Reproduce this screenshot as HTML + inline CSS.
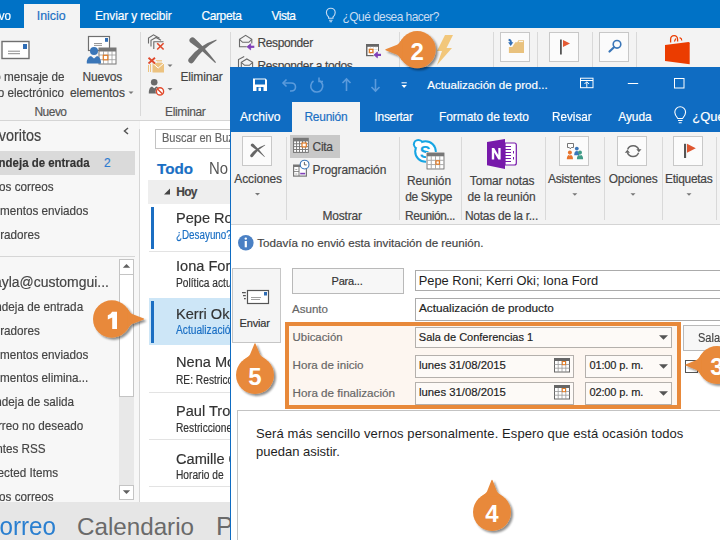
<!DOCTYPE html><html><head><meta charset="utf-8"><style>
html,body{margin:0;padding:0;width:720px;height:540px;overflow:hidden;background:#f3f3f3;font-family:'Liberation Sans', sans-serif;}
.t{position:absolute;white-space:nowrap;transform-origin:0 0;-webkit-text-stroke:0.18px currentColor;}
svg{position:absolute;left:0;top:0;}
</style></head><body>
<div style="position:absolute;left:0px;top:0px;width:720px;height:28px;background:#0072c6;"></div>
<div style="position:absolute;left:24px;top:4px;width:56px;height:24px;background:#f3f3f3;"></div>
<div style="position:absolute;left:0px;top:28px;width:720px;height:92px;background:#f3f3f3;"></div>
<div style="position:absolute;left:0px;top:120px;width:720px;height:1px;background:#d5d5d5;"></div>
<div style="position:absolute;left:0px;top:121px;width:139px;height:381px;background:#f7f7f7;"></div>
<div style="position:absolute;left:139px;top:129px;width:1px;height:373px;background:#d6d6d6;"></div>
<div style="position:absolute;left:0px;top:151px;width:135px;height:24px;background:#dadada;"></div>
<div style="position:absolute;left:0px;top:256px;width:135px;height:1px;background:#d6d6d6;"></div>
<div style="position:absolute;left:119px;top:259px;width:15px;height:241px;background:#e8e8e8;"></div>
<div style="position:absolute;left:119px;top:259px;width:15px;height:16px;background:#ffffff;border:1px solid #c4c4c4;box-sizing:border-box;"></div>
<div style="position:absolute;left:119px;top:274px;width:15px;height:123px;background:#ffffff;border:1px solid #c4c4c4;box-sizing:border-box;"></div>
<div style="position:absolute;left:119px;top:485px;width:15px;height:15px;background:#ffffff;border:1px solid #c4c4c4;box-sizing:border-box;"></div>
<div style="position:absolute;left:140px;top:121px;width:90px;height:381px;background:#ffffff;"></div>
<div style="position:absolute;left:155px;top:129px;width:80px;height:20px;background:#ffffff;border:1px solid #c3c3c3;box-sizing:border-box;"></div>
<div style="position:absolute;left:148px;top:180px;width:82px;height:24px;background:#eeeeee;"></div>
<div style="position:absolute;left:149px;top:251px;width:81px;height:1px;background:#e3e3e3;"></div>
<div style="position:absolute;left:149px;top:439px;width:81px;height:1px;background:#e3e3e3;"></div>
<div style="position:absolute;left:149px;top:486px;width:81px;height:1px;background:#e3e3e3;"></div>
<div style="position:absolute;left:149px;top:392px;width:81px;height:1px;background:#e3e3e3;"></div>
<div style="position:absolute;left:149px;top:298px;width:81px;height:47px;background:#cde6f7;"></div>
<div style="position:absolute;left:151px;top:207px;width:3px;height:42px;background:#1b6ec2;"></div>
<div style="position:absolute;left:151px;top:301px;width:3px;height:42px;background:#1b6ec2;"></div>
<div style="position:absolute;left:0px;top:502px;width:720px;height:38px;background:#e6e6e6;"></div>
<div style="position:absolute;left:140px;top:32px;width:1px;height:84px;background:#d9d9d9;"></div>
<div style="position:absolute;left:230px;top:32px;width:1px;height:84px;background:#d9d9d9;"></div>
<div style="position:absolute;left:399px;top:32px;width:1px;height:35px;background:#d9d9d9;"></div>
<div style="position:absolute;left:493px;top:32px;width:1px;height:35px;background:#d9d9d9;"></div>
<div style="position:absolute;left:537px;top:32px;width:1px;height:35px;background:#d9d9d9;"></div>
<div style="position:absolute;left:592px;top:32px;width:1px;height:35px;background:#d9d9d9;"></div>
<div style="position:absolute;left:636px;top:32px;width:1px;height:35px;background:#d9d9d9;"></div>
<div style="position:absolute;left:500px;top:32px;width:30px;height:30px;background:#fbfbfb;border:1px solid #c8c8c8;box-sizing:border-box;"></div>
<div style="position:absolute;left:549px;top:32px;width:30px;height:30px;background:#fbfbfb;border:1px solid #c8c8c8;box-sizing:border-box;"></div>
<div style="position:absolute;left:599px;top:32px;width:30px;height:30px;background:#fbfbfb;border:1px solid #c8c8c8;box-sizing:border-box;"></div>
<svg width="720" height="540" viewBox="0 0 720 540">
<!-- lightbulb top -->
<g stroke="#c8dcf2" fill="none" stroke-width="1.1"><path d="M328.6 18.3 V17 Q326.4 15.3 326.4 12.6 A4.4 4.4 0 0 1 335.2 12.6 Q335.2 15.3 333 17 V18.3 Z"/><path d="M329 20.2h3.6M329.6 21.8h2.4"/></g>
<!-- new mail -->
<rect x="2" y="41.5" width="27" height="17" fill="#fff" stroke="#6f6f6f" stroke-width="1.4"/>
<rect x="23" y="44" width="4" height="5" fill="#2f6db5"/>
<path d="M8 51.2h12M8 53.7h12" stroke="#8a8a8a" stroke-width="1"/>
<!-- nuevos elementos -->
<rect x="88.5" y="36.5" width="21" height="14" fill="#fff" stroke="#6f6f6f" stroke-width="1.2"/>
<rect x="105" y="38" width="3" height="3.8" fill="#2f6db5"/>
<path d="M94 43.5h8M94 45.4h8" stroke="#8a8a8a" stroke-width="0.9"/>
<rect x="99" y="48" width="17" height="16" fill="#fff" stroke="#777" stroke-width="1"/>
<rect x="99" y="48" width="17" height="3.5" fill="#777"/>
<path d="M103.5 51v13M108 51v13M112 51v13M99 55h17M99 59.7h17" stroke="#999" stroke-width="0.8"/>
<rect x="103.3" y="55.3" width="4.5" height="4.5" fill="#fff" stroke="#e07b26" stroke-width="1.2"/>
<circle cx="94" cy="51" r="4" fill="#3a76b8"/>
<path d="M86.8 63.5 Q86.5 57 91 56 L94 58.5 L97 56 Q101 57 101 63.5 Z" fill="#3a76b8"/>
<!-- dropdown tri nuevos -->
<path d="M128.5 91.5h5l-2.5 2.5z" fill="#777"/>
<!-- ignore -->
<g fill="none" stroke="#6a6a6a" stroke-width="1.1">
<path d="M148.5 43.5 V38 L153.5 34.8 L159.5 38.3"/><path d="M151 46.5 V40.3 L156 37.5 L161 40.3"/><path d="M153.8 49 V41.8 H163.5"/></g>
<path d="M157.2 43.2 L163.6 49.5 M163.6 43.2 L157.2 49.5" stroke="#e0492c" stroke-width="1.6"/>
<!-- cleanup -->
<rect x="152.5" y="63" width="11.5" height="9.5" fill="#ecc27f"/>
<path d="M152.5 63 L158.2 68 L164 63" stroke="#fff" stroke-width="1" fill="none"/>
<path d="M148.5 65v7M150.5 64v8" stroke="#ecc27f" stroke-width="1"/>
<path d="M156 60.5h6M157 62h5" stroke="#ecc27f" stroke-width="0.8"/>
<path d="M148.5 57.8 L155 63.5 M155 57.8 L148.5 63.5" stroke="#e0492c" stroke-width="1.8"/>
<path d="M167.5 64.5h5l-2.5 2.5z" fill="#777"/>
<!-- junk -->
<circle cx="154.2" cy="82.2" r="3.3" fill="#6a6a6a"/>
<path d="M148.8 93.5 Q148.8 87 152 86.5 L154.2 88.3 L156.4 86.5 Q158.5 87 159 88.5 L157 93.5 Z" fill="#6a6a6a"/>
<path d="M153.6 86.6 L154.2 88.6 L154.8 86.6 Z" fill="#fff"/>
<circle cx="160" cy="91.4" r="4.4" fill="#fff"/>
<circle cx="160" cy="91.4" r="3.6" fill="none" stroke="#e0492c" stroke-width="1.4"/>
<path d="M157.5 88.9 L162.5 93.9" stroke="#e0492c" stroke-width="1.4"/>
<path d="M167.5 88h5l-2.5 2.5z" fill="#777"/>
<!-- big X -->
<path d="M194.6 38.3 Q205 48 216 62.3 L215.2 62.9 Q203 51 190.4 42.6 A2.8 2.8 0 0 1 194.6 38.3 Z" fill="#707070"/>
<path d="M188.9 58.6 Q199.5 45 216.3 39.6 L216.6 40.5 Q202.5 48.5 193.6 62.1 A2.9 2.9 0 0 1 188.9 58.6 Z" fill="#707070"/>
<!-- reply -->
<g fill="none" stroke="#6a6a6a" stroke-width="1.1"><path d="M246.8 46.8 H239.5 V39.3 L245.6 35.3 L251.8 39.3 V43.5"/><path d="M239.5 39.3 L242.6 42.3 H248.8 L251.8 39.3"/></g>
<path d="M249.5 46.8h4.8" stroke="#8040b8" stroke-width="2.2"/><path d="M247 46.8 L250.6 43.8 V49.8 Z" fill="#8040b8" stroke="#8040b8" stroke-width="0.8" stroke-linejoin="round"/>
<!-- reply all (clipped) -->
<g fill="none" stroke="#6a6a6a" stroke-width="1.1"><path d="M238.5 67 V59.5 L244.2 56.5"/><path d="M241.3 67 V62.3 L246.8 59 L252.6 62.3 V67"/><path d="M241.3 62.3 L244.6 65.3 H249.4 L252.6 62.3"/></g>
<!-- meeting reply icon -->
<rect x="366" y="44" width="13" height="12.2" fill="#666"/>
<rect x="367.5" y="46.8" width="10.5" height="8.2" fill="#fff"/>
<path d="M367.5 49.5h10.5M367.5 52.3h10.5M370.5 46.8v8.2M373.5 46.8v8.2M376 46.8v8.2" stroke="#bbb" stroke-width="0.6" stroke-dasharray="1 1"/>
<rect x="369.4" y="49.3" width="3.5" height="3.3" fill="#fff" stroke="#e07b26" stroke-width="1.3"/>
<circle cx="377.5" cy="55" r="4" fill="#f1f1f1"/>
<path d="M376.5 54.9h4.5" stroke="#8040b8" stroke-width="2.2"/><path d="M374 54.9 L377.4 52 V57.8 Z" fill="#8040b8" stroke="#8040b8" stroke-width="0.8" stroke-linejoin="round"/>
<!-- lightning -->
<path d="M445 35 L453 35 L446.5 48 L452 48 L437 65 L442 51 L437 51 Z" fill="#f2c77b"/>
<!-- move folder -->
<path d="M508.9 47 L512.3 47 L515.3 42.2 L517.3 42.2 L518.3 40.2 L524 40.2 L524 53 L508.9 53 Z" fill="#e9c27e"/>
<path d="M518.8 41.6 h4.3" stroke="#fff" stroke-width="0.9"/>
<path d="M508.6 39.6 Q511.4 40.3 510.8 43" stroke="#2f6db5" stroke-width="1.8" fill="none"/>
<path d="M508.1 42.2 L513.3 42.2 L510.7 45.9 Z" fill="#2f6db5"/>
<!-- flag -->
<rect x="560" y="39.5" width="1.8" height="15" fill="#555"/>
<path d="M563 40 L570 43.5 L563 47 Z" fill="#e45a34"/>
<!-- search -->
<circle cx="617" cy="44.3" r="3.8" fill="none" stroke="#3a76b8" stroke-width="1.6"/>
<path d="M614 47.3 L609.5 51.5" stroke="#3a76b8" stroke-width="2.2" stroke-linecap="round"/>
<!-- store -->
<path d="M665 45 L688.5 42 Q689.7 42 689.7 43.3 L689.7 64.3 L665 61 Z" fill="#eb3c00"/>
<path d="M670.6 42.6 V39.5 Q670.6 35.6 674.2 35.6 Q677.4 35.6 677.6 39.5 V41.6" fill="none" stroke="#eb3c00" stroke-width="1.3"/>
<path d="M674.4 41.6 L675.8 38.6" stroke="#eb3c00" stroke-width="1.2"/>
<path d="M679.6 37.6 Q681.8 38.2 681.8 40.6" fill="none" stroke="#eb3c00" stroke-width="1.2"/>
<!-- nav chevron -->
<path d="M128 128 L124.5 131 L128 134" fill="none" stroke="#555" stroke-width="1.5"/>
<!-- hoy tri -->
<path d="M164 194.5 L170 194.5 L170 188.5 Z" fill="#444"/>
<!-- scrollbar tris -->
<path d="M122.8 267.8 h7.4 l-3.7 -3.7z" fill="#606060"/>
<path d="M122.8 490.2 h7.4 l-3.7 3.7z" fill="#606060"/>
</svg>
<div class="t" style="left:-28.02px;top:9.00px;font-size:13px;line-height:13px;color:#ffffff;font-weight:400;transform:scaleX(0.9000);">Archivo</div>
<div class="t" style="left:36.70px;top:10.01px;font-size:12.42px;line-height:12.42px;color:#1a6fc4;font-weight:400;letter-spacing:0.000px;">Inicio</div>
<div class="t" style="left:95.00px;top:11.00px;font-size:11.96px;line-height:11.96px;color:#ffffff;font-weight:400;letter-spacing:-0.149px;">Enviar y recibir</div>
<div class="t" style="left:201.40px;top:11.00px;font-size:11.96px;line-height:11.96px;color:#ffffff;font-weight:400;letter-spacing:-0.350px;">Carpeta</div>
<div class="t" style="left:271.40px;top:11.00px;font-size:11.96px;line-height:11.96px;color:#ffffff;font-weight:400;letter-spacing:-0.436px;">Vista</div>
<div class="t" style="left:342.60px;top:11.50px;font-size:11.96px;line-height:11.96px;color:#c8dcf2;font-weight:400;letter-spacing:-0.560px;-webkit-text-stroke:0;">¿Qué desea hacer?</div>
<div class="t" style="left:-32.57px;top:70.00px;font-size:13px;line-height:13px;color:#444444;font-weight:400;transform:scaleX(0.9000);">Nuevo mensaje de</div>
<div class="t" style="left:-29.30px;top:86.00px;font-size:13px;line-height:13px;color:#444444;font-weight:400;transform:scaleX(0.9000);">correo electrónico</div>
<div class="t" style="left:34.50px;top:107.00px;font-size:11.96px;line-height:11.96px;color:#555;font-weight:400;letter-spacing:-0.514px;">Nuevo</div>
<div class="t" style="left:82.60px;top:72.00px;font-size:11.96px;line-height:11.96px;color:#444444;font-weight:400;letter-spacing:-0.192px;">Nuevos</div>
<div class="t" style="left:70.00px;top:88.00px;font-size:11.96px;line-height:11.96px;color:#444444;font-weight:400;letter-spacing:-0.032px;">elementos</div>
<div class="t" style="left:180.40px;top:72.00px;font-size:11.96px;line-height:11.96px;color:#444444;font-weight:400;letter-spacing:-0.126px;">Eliminar</div>
<div class="t" style="left:165.00px;top:107.00px;font-size:11.96px;line-height:11.96px;color:#555;font-weight:400;letter-spacing:-0.339px;">Eliminar</div>
<div class="t" style="left:257.50px;top:38.00px;font-size:11.96px;line-height:11.96px;color:#444444;font-weight:400;letter-spacing:-0.358px;">Responder</div>
<div class="t" style="left:257.50px;top:60.50px;font-size:11.96px;line-height:11.96px;color:#444444;font-weight:400;letter-spacing:-0.357px;">Responder a todos</div>
<div class="t" style="left:-17.62px;top:128.01px;font-size:16px;line-height:16px;color:#444444;font-weight:400;transform:scaleX(0.9000);">Favoritos</div>
<div class="t" style="left:-15.55px;top:156.00px;font-size:13px;line-height:13px;color:#333;font-weight:700;transform:scaleX(0.8800);">Bandeja de entrada</div>
<div class="t" style="left:104.00px;top:158.00px;font-size:11.96px;line-height:11.96px;color:#2d7bd0;font-weight:400;letter-spacing:-0.656px;">2</div>
<div class="t" style="left:-38.20px;top:179.50px;font-size:13px;line-height:13px;color:#444444;font-weight:400;transform:scaleX(0.9000);">Todos los correos</div>
<div class="t" style="left:-17.37px;top:203.50px;font-size:13px;line-height:13px;color:#444444;font-weight:400;transform:scaleX(0.9000);">Elementos enviados</div>
<div class="t" style="left:-17.88px;top:227.50px;font-size:13px;line-height:13px;color:#444444;font-weight:400;transform:scaleX(0.9000);">Borradores</div>
<div class="t" style="left:-13.44px;top:274.01px;font-size:15.5px;line-height:15.5px;color:#444444;font-weight:400;transform:scaleX(0.9000);">kayla@customgui...</div>
<div class="t" style="left:-18.64px;top:299.50px;font-size:13px;line-height:13px;color:#444444;font-weight:400;transform:scaleX(0.9000);">Bandeja de entrada</div>
<div class="t" style="left:-17.88px;top:323.71px;font-size:13px;line-height:13px;color:#444444;font-weight:400;transform:scaleX(0.9000);">Borradores</div>
<div class="t" style="left:-17.37px;top:347.50px;font-size:13px;line-height:13px;color:#444444;font-weight:400;transform:scaleX(0.9000);">Elementos enviados</div>
<div class="t" style="left:-17.36px;top:371.00px;font-size:13px;line-height:13px;color:#444444;font-weight:400;transform:scaleX(0.9000);">Elementos elimina...</div>
<div class="t" style="left:-19.02px;top:394.60px;font-size:13px;line-height:13px;color:#444444;font-weight:400;transform:scaleX(0.9000);">Bandeja de salida</div>
<div class="t" style="left:-17.48px;top:418.50px;font-size:13px;line-height:13px;color:#444444;font-weight:400;transform:scaleX(0.9000);">Correo no deseado</div>
<div class="t" style="left:-23.60px;top:442.00px;font-size:13px;line-height:13px;color:#444444;font-weight:400;transform:scaleX(0.9000);">Fuentes RSS</div>
<div class="t" style="left:-20.03px;top:466.00px;font-size:13px;line-height:13px;color:#444444;font-weight:400;transform:scaleX(0.9000);">Rejected Items</div>
<div class="t" style="left:-37.70px;top:490.00px;font-size:13px;line-height:13px;color:#444444;font-weight:400;transform:scaleX(0.9000);">Todos los correos</div>
<div class="t" style="left:162.00px;top:132.41px;font-size:12px;line-height:12px;color:#666;font-weight:400;transform:scaleX(0.9200);">Buscar en Buzón actual</div>
<div class="t" style="left:157.00px;top:161.00px;font-size:15.20px;line-height:15.20px;color:#1a6fc4;font-weight:700;letter-spacing:0.000px;">Todo</div>
<div class="t" style="left:208.70px;top:160.01px;font-size:16.5px;line-height:16.5px;color:#555;font-weight:400;transform:scaleX(0.9000);-webkit-text-stroke:0;">No leído</div>
<div class="t" style="left:176.30px;top:186.50px;font-size:11.96px;line-height:11.96px;color:#444;font-weight:700;letter-spacing:-0.733px;">Hoy</div>
<div class="t" style="left:175.50px;top:210.01px;font-size:15.5px;line-height:15.5px;color:#333;font-weight:400;transform:scaleX(0.9400);">Pepe Roni</div>
<div class="t" style="left:175.50px;top:229.01px;font-size:12px;line-height:12px;color:#1a6fc4;font-weight:400;transform:scaleX(0.8200);">¿Desayuno?</div>
<div class="t" style="left:175.50px;top:258.01px;font-size:15.5px;line-height:15.5px;color:#333;font-weight:400;transform:scaleX(0.9400);">Iona Ford</div>
<div class="t" style="left:175.50px;top:276.71px;font-size:12px;line-height:12px;color:#333;font-weight:400;transform:scaleX(0.8500);">Política actualizada</div>
<div class="t" style="left:175.50px;top:305.71px;font-size:15.5px;line-height:15.5px;color:#333;font-weight:400;transform:scaleX(0.9400);">Kerri Oki</div>
<div class="t" style="left:175.50px;top:324.41px;font-size:12px;line-height:12px;color:#1a6fc4;font-weight:400;transform:scaleX(0.8500);">Actualización</div>
<div class="t" style="left:175.50px;top:353.51px;font-size:15.5px;line-height:15.5px;color:#333;font-weight:400;transform:scaleX(0.9400);">Nena Mo</div>
<div class="t" style="left:175.50px;top:373.51px;font-size:12px;line-height:12px;color:#333;font-weight:400;transform:scaleX(0.8500);">RE: Restricciones</div>
<div class="t" style="left:175.50px;top:403.01px;font-size:15.5px;line-height:15.5px;color:#333;font-weight:400;transform:scaleX(0.9400);">Paul Tron</div>
<div class="t" style="left:175.50px;top:421.81px;font-size:12px;line-height:12px;color:#333;font-weight:400;transform:scaleX(0.8500);">Restricciones</div>
<div class="t" style="left:175.50px;top:450.80px;font-size:15.5px;line-height:15.5px;color:#333;font-weight:400;transform:scaleX(0.9400);">Camille C</div>
<div class="t" style="left:175.50px;top:469.01px;font-size:12px;line-height:12px;color:#333;font-weight:400;transform:scaleX(0.8500);">Horario de</div>
<div class="t" style="left:-17.92px;top:513.00px;font-size:26px;line-height:26px;color:#2a7fd0;font-weight:400;transform:scaleX(0.9300);-webkit-text-stroke:0;">Correo</div>
<div class="t" style="left:77.00px;top:515.01px;font-size:24.19px;line-height:24.19px;color:#6a6a6a;font-weight:400;letter-spacing:0.000px;-webkit-text-stroke:0;">Calendario</div>
<div class="t" style="left:216.00px;top:513.00px;font-size:26px;line-height:26px;color:#6a6a6a;font-weight:400;-webkit-text-stroke:0;">Personas</div>
<div style="position:absolute;left:230px;top:67px;width:490px;height:473px;background:#ffffff;"></div>
<div style="position:absolute;left:230px;top:67px;width:490px;height:65px;background:#0f6cc2;"></div>
<div style="position:absolute;left:230px;top:67px;width:1px;height:473px;background:#0f6cc2;"></div>
<div style="position:absolute;left:292px;top:102px;width:68px;height:30px;background:#f3f3f3;"></div>
<div style="position:absolute;left:231px;top:132px;width:489px;height:92px;background:#f3f3f3;"></div>
<div style="position:absolute;left:231px;top:224px;width:489px;height:1px;background:#d4d4d4;"></div>
<div style="position:absolute;left:286px;top:137px;width:1px;height:83px;background:#d9d9d9;"></div>
<div style="position:absolute;left:399px;top:137px;width:1px;height:83px;background:#d9d9d9;"></div>
<div style="position:absolute;left:461px;top:137px;width:1px;height:83px;background:#d9d9d9;"></div>
<div style="position:absolute;left:545px;top:137px;width:1px;height:83px;background:#d9d9d9;"></div>
<div style="position:absolute;left:604px;top:137px;width:1px;height:83px;background:#d9d9d9;"></div>
<div style="position:absolute;left:662px;top:137px;width:1px;height:83px;background:#d9d9d9;"></div>
<div style="position:absolute;left:716px;top:137px;width:1px;height:83px;background:#d9d9d9;"></div>
<div style="position:absolute;left:242px;top:136px;width:30px;height:30px;background:#fbfbfb;border:1px solid #c8c8c8;box-sizing:border-box;"></div>
<div style="position:absolute;left:559px;top:136px;width:30px;height:30px;background:#fbfbfb;border:1px solid #c8c8c8;box-sizing:border-box;"></div>
<div style="position:absolute;left:617px;top:136px;width:30px;height:30px;background:#fbfbfb;border:1px solid #c8c8c8;box-sizing:border-box;"></div>
<div style="position:absolute;left:673px;top:136px;width:30px;height:30px;background:#fbfbfb;border:1px solid #c8c8c8;box-sizing:border-box;"></div>
<div style="position:absolute;left:290px;top:135px;width:50px;height:23px;background:#c8c8c8;"></div>
<div style="position:absolute;left:232px;top:268px;width:49px;height:75px;background:#f5f5f5;border:1px solid #c6c6c6;box-sizing:border-box;"></div>
<div style="position:absolute;left:292px;top:268px;width:112px;height:26px;background:#f7f7f7;border:1px solid #b9b9b9;box-sizing:border-box;"></div>
<div style="position:absolute;left:415px;top:270px;width:320px;height:21px;background:#ffffff;border:1px solid #ababab;box-sizing:border-box;"></div>
<div style="position:absolute;left:415px;top:298px;width:320px;height:23px;background:#ffffff;border:1px solid #ababab;box-sizing:border-box;"></div>
<div style="position:absolute;left:285px;top:322px;width:396px;height:87px;background:#fdf6f0;border:4px solid #e8893a;box-sizing:border-box;"></div>
<div style="position:absolute;left:415px;top:327px;width:257px;height:21px;background:#fdfaf7;border:1px solid #b4b0ac;box-sizing:border-box;"></div>
<div style="position:absolute;left:415px;top:355px;width:159px;height:23px;background:#fdfaf7;border:1px solid #b4b0ac;box-sizing:border-box;"></div>
<div style="position:absolute;left:585px;top:355px;width:87px;height:23px;background:#fdfaf7;border:1px solid #b4b0ac;box-sizing:border-box;"></div>
<div style="position:absolute;left:415px;top:382px;width:159px;height:23px;background:#fdfaf7;border:1px solid #b4b0ac;box-sizing:border-box;"></div>
<div style="position:absolute;left:585px;top:382px;width:87px;height:23px;background:#fdfaf7;border:1px solid #b4b0ac;box-sizing:border-box;"></div>
<div style="position:absolute;left:683px;top:325px;width:50px;height:26px;background:#f7f7f7;border:1px solid #b9b9b9;box-sizing:border-box;"></div>
<div style="position:absolute;left:685px;top:360px;width:13px;height:13px;background:#ffffff;border:1px solid #555;box-sizing:border-box;"></div>
<div style="position:absolute;left:237px;top:410px;width:500px;height:140px;background:#ffffff;border:1px solid #c3c3c3;box-sizing:border-box;"></div>
<svg width="720" height="540" viewBox="0 0 720 540">
<!-- save -->
<path d="M253 78.5 h12.5 l1.5 1.5 v11 h-14 z" fill="#fff"/>
<rect x="255" y="79.5" width="10" height="5" fill="#0f6cc2"/>
<rect x="256.5" y="87" width="7" height="4" fill="#0f6cc2"/>
<rect x="258.5" y="87.5" width="2.5" height="3.5" fill="#fff"/>
<!-- undo -->
<g fill="none" stroke="#5b9bdc" stroke-width="1.6"><path d="M283 83 h8 q4.5 0 4.5 4 q0 4 -4.5 4 h-1"/><path d="M286.5 79.5 l-3.5 3.5 3.5 3.5"/></g>
<!-- redo circular -->
<g fill="none" stroke="#5b9bdc" stroke-width="1.6"><path d="M313.5 81 a6 6 0 1 0 6 -0.3"/><path d="M319 77.5 v4 h4"/></g>
<!-- up/down -->
<g fill="none" stroke="#5b9bdc" stroke-width="1.6"><path d="M346.5 91 V79 M342.5 83 l4 -4 4 4"/><path d="M375.5 79 V91 M371.5 87 l4 4 4 -4"/></g>
<!-- qat -->
<path d="M401.5 82.8 h5.3" stroke="#fff" stroke-width="1"/><path d="M401.5 85 h5.3 l-2.65 3z" fill="#fff"/>
<!-- ribbon display -->
<g fill="none" stroke="#fff" stroke-width="1"><rect x="580.5" y="78.2" width="12.5" height="9.5"/><path d="M580.5 80.5h12.5"/><path d="M586.8 87.5v-5.5 M584.5 84 l2.3 -2.3 2.3 2.3"/></g>
<path d="M627.8 83.5 h10.4" stroke="#fff" stroke-width="1"/>
<rect x="674.5" y="78.5" width="9.5" height="9.5" fill="none" stroke="#fff" stroke-width="1"/>
<!-- lightbulb -->
<g stroke="#fff" fill="none" stroke-width="1.1"><path d="M677.8 118.5 Q674.8 115 674.8 112.2 A5.4 5.4 0 0 1 685.6 112.2 Q685.6 115 682.6 118.5 Z"/><path d="M678 120.5h4.5M678.7 122.8h3"/></g>
<!-- acciones X -->
<g transform="translate(150.4,123.7) scale(0.53)"><path d="M194.6 38.3 Q205 48 216 62.3 L215.2 62.9 Q203 51 190.4 42.6 A2.8 2.8 0 0 1 194.6 38.3 Z" fill="#666"/>
<path d="M188.9 58.6 Q199.5 45 216.3 39.6 L216.6 40.5 Q202.5 48.5 193.6 62.1 A2.9 2.9 0 0 1 188.9 58.6 Z" fill="#666"/></g>
<path d="M255 193h5l-2.5 2.5z" fill="#777"/>
<!-- cita icon -->
<rect x="293" y="137.8" width="15.8" height="15.1" fill="#777"/>
<rect x="294.10" y="141.40" width="2" height="1.9" fill="#fff"/>
<rect x="294.10" y="144.25" width="2" height="1.9" fill="#fff"/>
<rect x="294.10" y="147.10" width="2" height="1.9" fill="#fff"/>
<rect x="294.10" y="149.95" width="2" height="1.9" fill="#fff"/>
<rect x="297.05" y="141.40" width="2" height="1.9" fill="#fff"/>
<rect x="297.05" y="144.25" width="2" height="1.9" fill="#fff"/>
<rect x="297.05" y="147.10" width="2" height="1.9" fill="#fff"/>
<rect x="297.05" y="149.95" width="2" height="1.9" fill="#fff"/>
<rect x="300.00" y="141.40" width="2" height="1.9" fill="#fff"/>
<rect x="300.00" y="144.25" width="2" height="1.9" fill="#fff"/>
<rect x="300.00" y="147.10" width="2" height="1.9" fill="#fff"/>
<rect x="300.00" y="149.95" width="2" height="1.9" fill="#fff"/>
<rect x="302.95" y="141.40" width="2" height="1.9" fill="#fff"/>
<rect x="302.95" y="144.25" width="2" height="1.9" fill="#fff"/>
<rect x="302.95" y="147.10" width="2" height="1.9" fill="#fff"/>
<rect x="302.95" y="149.95" width="2" height="1.9" fill="#fff"/>
<rect x="305.90" y="141.40" width="2" height="1.9" fill="#fff"/>
<rect x="305.90" y="144.25" width="2" height="1.9" fill="#fff"/>
<rect x="305.90" y="147.10" width="2" height="1.9" fill="#fff"/>
<rect x="305.90" y="149.95" width="2" height="1.9" fill="#fff"/>
<rect x="302" y="143" width="4.3" height="3.9" fill="#fff" stroke="#e07b26" stroke-width="1.2"/>
<!-- programacion icon -->
<rect x="293" y="164.5" width="14" height="12.2" fill="#777"/>
<rect x="294.2" y="167" width="4.3" height="4" fill="#fff"/><rect x="294.2" y="171.8" width="4.3" height="3.7" fill="#fff"/>
<rect x="299.5" y="167" width="6.3" height="8.5" fill="#fff"/>
<path d="M295.3 169.5h2M295.3 174h2" stroke="#888" stroke-width="0.7"/>
<rect x="300.2" y="172.8" width="5" height="1.6" fill="#8040b8"/>
<circle cx="304.6" cy="164.6" r="4.4" fill="#fff" stroke="#3a76b8" stroke-width="1.1"/>
<path d="M304.4 162v2.9h2.2" stroke="#555" stroke-width="0.9" fill="none"/>
<!-- skype -->
<g fill="#16a5e3"><circle cx="425.5" cy="151.5" r="11.3"/><circle cx="418.3" cy="144.3" r="5.4"/><circle cx="432.7" cy="158.7" r="5.4"/></g>
<g fill="#fff"><circle cx="425.5" cy="151.5" r="9.3"/><circle cx="418.3" cy="144.3" r="3.4"/><circle cx="432.7" cy="158.7" r="3.4"/></g>
<text x="425.3" y="158" font-family="Liberation Sans" font-weight="700" font-size="16.5" fill="#16a5e3" text-anchor="middle">S</text>
<rect x="426" y="152" width="19" height="18" fill="#fff"/>
<rect x="427" y="153" width="17" height="16" fill="#fff" stroke="#777" stroke-width="1"/>
<rect x="427" y="153" width="17" height="3.3" fill="#777"/>
<path d="M431.25 156v13M435.5 156v13M439.75 156v13M427 160.3h17M427 164.6h17" stroke="#aaa" stroke-width="1"/>
<rect x="436" y="160.8" width="3.4" height="3.4" fill="#fff" stroke="#e07b26" stroke-width="1.2"/>
<!-- onenote -->
<path d="M505 143 H514.5 Q516.3 143 516.3 145 V163 Q516.3 165 514.5 165 H505 Z" fill="#fff" stroke="#7719aa" stroke-width="1.2"/>
<path d="M513.5 151v2.5M513.5 157v2.5" stroke="#7719aa" stroke-width="1"/>
<path d="M505 146.5h6M505 149.5h6M505 152.5h6M505 155.5h6M505 158.5h6M505 161.5h6" stroke="#7719aa" stroke-width="1.1"/>
<path d="M487 142 L505 139 V169 L487 165.3 Z" fill="#7719aa"/>
<path d="M491.8 159.6 V148 H494.2 L498.3 155 V148 H500.6 V159.6 H498.3 L494.2 152.6 V159.6 Z" fill="#fff"/>
<!-- asistentes -->
<path d="M567.5 143.5 h6 v4 h-2.2 l-1 1.3 -1 -1.3 h-1.8 z" fill="#fff" stroke="#666" stroke-width="0.9"/>
<circle cx="576.8" cy="148.6" r="1.9" fill="#3a76b8"/><path d="M574.2 155.3 q0 -4.3 2.6 -4.3 q2.6 0 2.6 4.3z" fill="#3a76b8"/>
<circle cx="569.9" cy="152.4" r="2" fill="#e8742c"/><path d="M566.8 159.3 q0 -4.6 3.1 -4.6 q3.1 0 3.1 4.6z" fill="#e8742c"/>
<path d="M569.2 155 l0.7 1 0.7 -1z" fill="#fff"/>
<circle cx="580" cy="152.6" r="2" fill="#3f9a86"/><path d="M576.9 159.3 q0 -4.6 3.1 -4.6 q3.1 0 3.1 4.6z" fill="#3f9a86"/>
<path d="M579.3 155 l0.7 1 0.7 -1z" fill="#fff"/>
<path d="M572.3 193.2h5l-2.5 2.5z" fill="#777"/>
<!-- opciones -->
<g fill="none" stroke="#666" stroke-width="1.5"><path d="M627.6 149.5 A6 6 0 0 1 638.8 149.8"/><path d="M638.6 152.7 A6 6 0 0 1 627.4 152.4"/></g>
<path d="M636.3 149.3 h5.2 l-2.6 3z M624.8 152.8 h5.2 l-2.6 -3z" fill="#666"/>
<path d="M630.5 193.2h5l-2.5 2.5z" fill="#777"/>
<!-- etiquetas flag -->
<rect x="684" y="143.8" width="2.1" height="14.2" fill="#555"/>
<path d="M687 143.8 L695.8 148.3 L687 152.7 Z" fill="#de5630"/>
<path d="M686.5 193.2h5l-2.5 2.5z" fill="#777"/>
<!-- info -->
<circle cx="245.8" cy="242.8" r="7.8" fill="#4a80c4"/>
<circle cx="245.8" cy="238.6" r="1.2" fill="#fff"/>
<rect x="244.7" y="241" width="2.2" height="6.3" fill="#fff"/>
<!-- enviar icon -->
<rect x="247.5" y="290.5" width="21" height="13" fill="#fff" stroke="#555" stroke-width="1.2"/>
<rect x="264" y="292" width="3" height="3.5" fill="#2f6db5"/>
<path d="M251 297.5h10M251 299.5h9" stroke="#888" stroke-width="0.8"/>
<path d="M242 292.6h3.8M243 295.6h2.8M244 298.6h1.8" stroke="#555" stroke-width="1.1"/>
<!-- field dropdowns -->
<path d="M659 335.3h9l-4.5 4.5z" fill="#555"/>
<path d="M659 364.3h9l-4.5 4.5z" fill="#555"/>
<path d="M659 391.3h9l-4.5 4.5z" fill="#555"/>
<!-- date cal icons -->
<g>
<rect x="554.5" y="358.5" width="15" height="13.5" fill="#fff" stroke="#666" stroke-width="1"/>
<rect x="554.5" y="358.5" width="15" height="2.5" fill="#666"/>
<path d="M558.2 361v11M562 361v11M565.8 361v11M554.5 364.5h15M554.5 368.2h15" stroke="#999" stroke-width="0.8"/>
<rect x="562.3" y="361.5" width="3.2" height="3.2" fill="#fff" stroke="#e07b26" stroke-width="1"/>
</g>
<g transform="translate(0,27)">
<rect x="554.5" y="358.5" width="15" height="13.5" fill="#fff" stroke="#666" stroke-width="1"/>
<rect x="554.5" y="358.5" width="15" height="2.5" fill="#666"/>
<path d="M558.2 361v11M562 361v11M565.8 361v11M554.5 364.5h15M554.5 368.2h15" stroke="#999" stroke-width="0.8"/>
<rect x="562.3" y="361.5" width="3.2" height="3.2" fill="#fff" stroke="#e07b26" stroke-width="1"/>
</g>
</svg>
<div class="t" style="left:427.30px;top:80.20px;font-size:11.59px;line-height:11.59px;color:#ffffff;font-weight:400;letter-spacing:0.000px;">Actualización de prod...</div>
<div class="t" style="left:240.00px;top:111.01px;font-size:12.17px;line-height:12.17px;color:#ffffff;font-weight:400;letter-spacing:0.000px;">Archivo</div>
<div class="t" style="left:304.40px;top:112.00px;font-size:11.96px;line-height:11.96px;color:#1a6fc4;font-weight:400;letter-spacing:-0.223px;">Reunión</div>
<div class="t" style="left:374.60px;top:112.00px;font-size:11.96px;line-height:11.96px;color:#ffffff;font-weight:400;letter-spacing:-0.319px;">Insertar</div>
<div class="t" style="left:438.90px;top:112.00px;font-size:11.96px;line-height:11.96px;color:#ffffff;font-weight:400;letter-spacing:-0.026px;">Formato de texto</div>
<div class="t" style="left:552.13px;top:110.00px;font-size:13px;line-height:13px;color:#ffffff;font-weight:400;transform:scaleX(0.9000);">Revisar</div>
<div class="t" style="left:618.20px;top:112.00px;font-size:11.96px;line-height:11.96px;color:#ffffff;font-weight:400;letter-spacing:-0.062px;">Ayuda</div>
<div class="t" style="left:692.20px;top:110.00px;font-size:13px;line-height:13px;color:#ffffff;font-weight:400;">¿Qué desea hacer?</div>
<div class="t" style="left:234.30px;top:174.00px;font-size:11.96px;line-height:11.96px;color:#444444;font-weight:400;letter-spacing:-0.104px;">Acciones</div>
<div class="t" style="left:312.60px;top:141.81px;font-size:11.96px;line-height:11.96px;color:#444444;font-weight:400;letter-spacing:-0.294px;">Cita</div>
<div class="t" style="left:312.60px;top:164.71px;font-size:11.96px;line-height:11.96px;color:#444444;font-weight:400;letter-spacing:-0.064px;">Programación</div>
<div class="t" style="left:322.60px;top:210.71px;font-size:11.96px;line-height:11.96px;color:#444444;font-weight:400;letter-spacing:-0.191px;">Mostrar</div>
<div class="t" style="left:407.00px;top:175.81px;font-size:11.96px;line-height:11.96px;color:#444444;font-weight:400;letter-spacing:-0.080px;">Reunión</div>
<div class="t" style="left:405.30px;top:191.81px;font-size:11.96px;line-height:11.96px;color:#444444;font-weight:400;letter-spacing:-0.408px;">de Skype</div>
<div class="t" style="left:405.00px;top:210.71px;font-size:11.96px;line-height:11.96px;color:#444444;font-weight:400;letter-spacing:-0.452px;">Reunión...</div>
<div class="t" style="left:469.80px;top:175.81px;font-size:11.96px;line-height:11.96px;color:#444444;font-weight:400;letter-spacing:-0.102px;">Tomar notas</div>
<div class="t" style="left:467.40px;top:191.81px;font-size:11.96px;line-height:11.96px;color:#444444;font-weight:400;letter-spacing:-0.066px;">de la reunión</div>
<div class="t" style="left:465.00px;top:210.71px;font-size:11.96px;line-height:11.96px;color:#444444;font-weight:400;letter-spacing:-0.258px;">Notas de la r...</div>
<div class="t" style="left:548.00px;top:174.00px;font-size:11.96px;line-height:11.96px;color:#444444;font-weight:400;letter-spacing:-0.269px;">Asistentes</div>
<div class="t" style="left:608.75px;top:174.00px;font-size:11.96px;line-height:11.96px;color:#444444;font-weight:400;letter-spacing:-0.222px;">Opciones</div>
<div class="t" style="left:665.00px;top:174.00px;font-size:11.96px;line-height:11.96px;color:#444444;font-weight:400;letter-spacing:-0.263px;">Etiquetas</div>
<div class="t" style="left:257.20px;top:237.01px;font-size:11.64px;line-height:11.64px;color:#444444;font-weight:400;letter-spacing:0.000px;">Todavía no envió esta invitación de reunión.</div>
<div class="t" style="left:331.60px;top:275.81px;font-size:11.04px;line-height:11.04px;color:#333;font-weight:400;letter-spacing:-0.233px;">Para...</div>
<div class="t" style="left:239.60px;top:317.71px;font-size:11.04px;line-height:11.04px;color:#333;font-weight:400;letter-spacing:-0.182px;">Enviar</div>
<div class="t" style="left:292.00px;top:304.00px;font-size:11.56px;line-height:11.56px;color:#666;font-weight:400;letter-spacing:0.000px;">Asunto</div>
<div class="t" style="left:418.70px;top:274.80px;font-size:12.87px;line-height:12.87px;color:#1e1e1e;font-weight:400;letter-spacing:0.000px;-webkit-text-stroke:0;">Pepe Roni; Kerri Oki; Iona Ford</div>
<div class="t" style="left:419.00px;top:301.71px;font-size:11.77px;line-height:11.77px;color:#1e1e1e;font-weight:400;letter-spacing:0.000px;">Actualización de producto</div>
<div class="t" style="left:292.60px;top:332.01px;font-size:11.38px;line-height:11.38px;color:#666;font-weight:400;letter-spacing:0.000px;">Ubicación</div>
<div class="t" style="left:292.60px;top:358.71px;font-size:11.61px;line-height:11.61px;color:#666;font-weight:400;letter-spacing:0.000px;">Hora de inicio</div>
<div class="t" style="left:292.60px;top:386.50px;font-size:11.66px;line-height:11.66px;color:#666;font-weight:400;letter-spacing:0.000px;">Hora de finalización</div>
<div class="t" style="left:418.80px;top:332.00px;font-size:11.04px;line-height:11.04px;color:#1e1e1e;font-weight:400;letter-spacing:-0.017px;">Sala de Conferencias 1</div>
<div class="t" style="left:419.00px;top:359.90px;font-size:11.34px;line-height:11.34px;color:#1e1e1e;font-weight:400;letter-spacing:0.000px;">lunes 31/08/2015</div>
<div class="t" style="left:419.00px;top:386.50px;font-size:11.34px;line-height:11.34px;color:#1e1e1e;font-weight:400;letter-spacing:0.000px;">lunes 31/08/2015</div>
<div class="t" style="left:589.40px;top:359.90px;font-size:11.04px;line-height:11.04px;color:#1e1e1e;font-weight:400;letter-spacing:-0.122px;">01:00 p. m.</div>
<div class="t" style="left:589.40px;top:386.50px;font-size:11.04px;line-height:11.04px;color:#1e1e1e;font-weight:400;letter-spacing:-0.122px;">02:00 p. m.</div>
<div class="t" style="left:698.40px;top:331.51px;font-size:12px;line-height:12px;color:#444;font-weight:400;transform:scaleX(0.9200);">Sala</div>
<div class="t" style="left:256.00px;top:426.50px;font-size:13.00px;line-height:13.00px;color:#1e1e1e;font-weight:400;letter-spacing:0.100px;-webkit-text-stroke:0;">Será más sencillo vernos personalmente. Espero que está ocasión todos</div>
<div class="t" style="left:256.00px;top:445.21px;font-size:13px;line-height:13px;color:#1e1e1e;font-weight:400;-webkit-text-stroke:0;">puedan asistir.</div>
<svg width="720" height="540" viewBox="0 0 720 540">
<defs><filter id="sh" x="-30%" y="-30%" width="160%" height="160%"><feGaussianBlur in="SourceAlpha" stdDeviation="1.3"/><feOffset dx="1.5" dy="1.5"/><feComponentTransfer><feFuncA type="linear" slope="0.45"/></feComponentTransfer><feMerge><feMergeNode/><feMergeNode in="SourceGraphic"/></feMerge></filter></defs>
<g filter="url(#sh)"><g transform="translate(111.8,319) rotate(0.00)"><circle cx="0" cy="0" r="18.8" fill="#e8893a"/><path d="M15.21 -11.05 Q18.42 -6.00 20.30 -5.00 L32.00 -0.45 Q32.80 0 32.00 0.45 L20.30 5.00 Q18.42 6.00 15.21 11.05 Z" fill="#e8893a"/></g></g>
<path transform="translate(0.00,0.00)" d="M112.2 311.7 H117 V329.1 H112.2 V317.6 Q110 318.9 107.8 319.4 V315.3 Q110.9 314.1 112.2 311.7 Z" fill="#fff"/>
<g filter="url(#sh)"><g transform="translate(417.2,49.7) rotate(180.00)"><circle cx="0" cy="0" r="18.6" fill="#e8893a"/><path d="M15.05 -10.93 Q18.23 -6.00 20.09 -5.00 L31.60 -0.45 Q32.40 0 31.60 0.45 L20.09 5.00 Q18.23 6.00 15.05 10.93 Z" fill="#e8893a"/></g></g>
<text x="417.2" y="59.90" font-family="Liberation Sans" font-weight="700" font-size="24" fill="#fff" text-anchor="middle">2</text>
<g filter="url(#sh)"><g transform="translate(717,365) rotate(180.00)"><circle cx="0" cy="0" r="19" fill="#e8893a"/><path d="M15.37 -11.17 Q18.62 -6.00 20.52 -5.00 L31.40 -0.45 Q32.20 0 31.40 0.45 L20.52 5.00 Q18.62 6.00 15.37 11.17 Z" fill="#e8893a"/></g></g>
<text x="717" y="375.20" font-family="Liberation Sans" font-weight="700" font-size="24" fill="#fff" text-anchor="middle">3</text>
<g filter="url(#sh)"><g transform="translate(492,512) rotate(-90.00)"><circle cx="0" cy="0" r="19" fill="#e8893a"/><path d="M15.37 -11.17 Q18.62 -6.00 20.52 -5.00 L31.90 -0.45 Q32.70 0 31.90 0.45 L20.52 5.00 Q18.62 6.00 15.37 11.17 Z" fill="#e8893a"/></g></g>
<text x="492" y="522.20" font-family="Liberation Sans" font-weight="700" font-size="24" fill="#fff" text-anchor="middle">4</text>
<g filter="url(#sh)"><g transform="translate(255,375) rotate(-90.00)"><circle cx="0" cy="0" r="19" fill="#e8893a"/><path d="M15.37 -11.17 Q18.62 -6.00 20.52 -5.00 L31.40 -0.45 Q32.20 0 31.40 0.45 L20.52 5.00 Q18.62 6.00 15.37 11.17 Z" fill="#e8893a"/></g></g>
<text x="255" y="385.20" font-family="Liberation Sans" font-weight="700" font-size="24" fill="#fff" text-anchor="middle">5</text>
</svg>
</body></html>
